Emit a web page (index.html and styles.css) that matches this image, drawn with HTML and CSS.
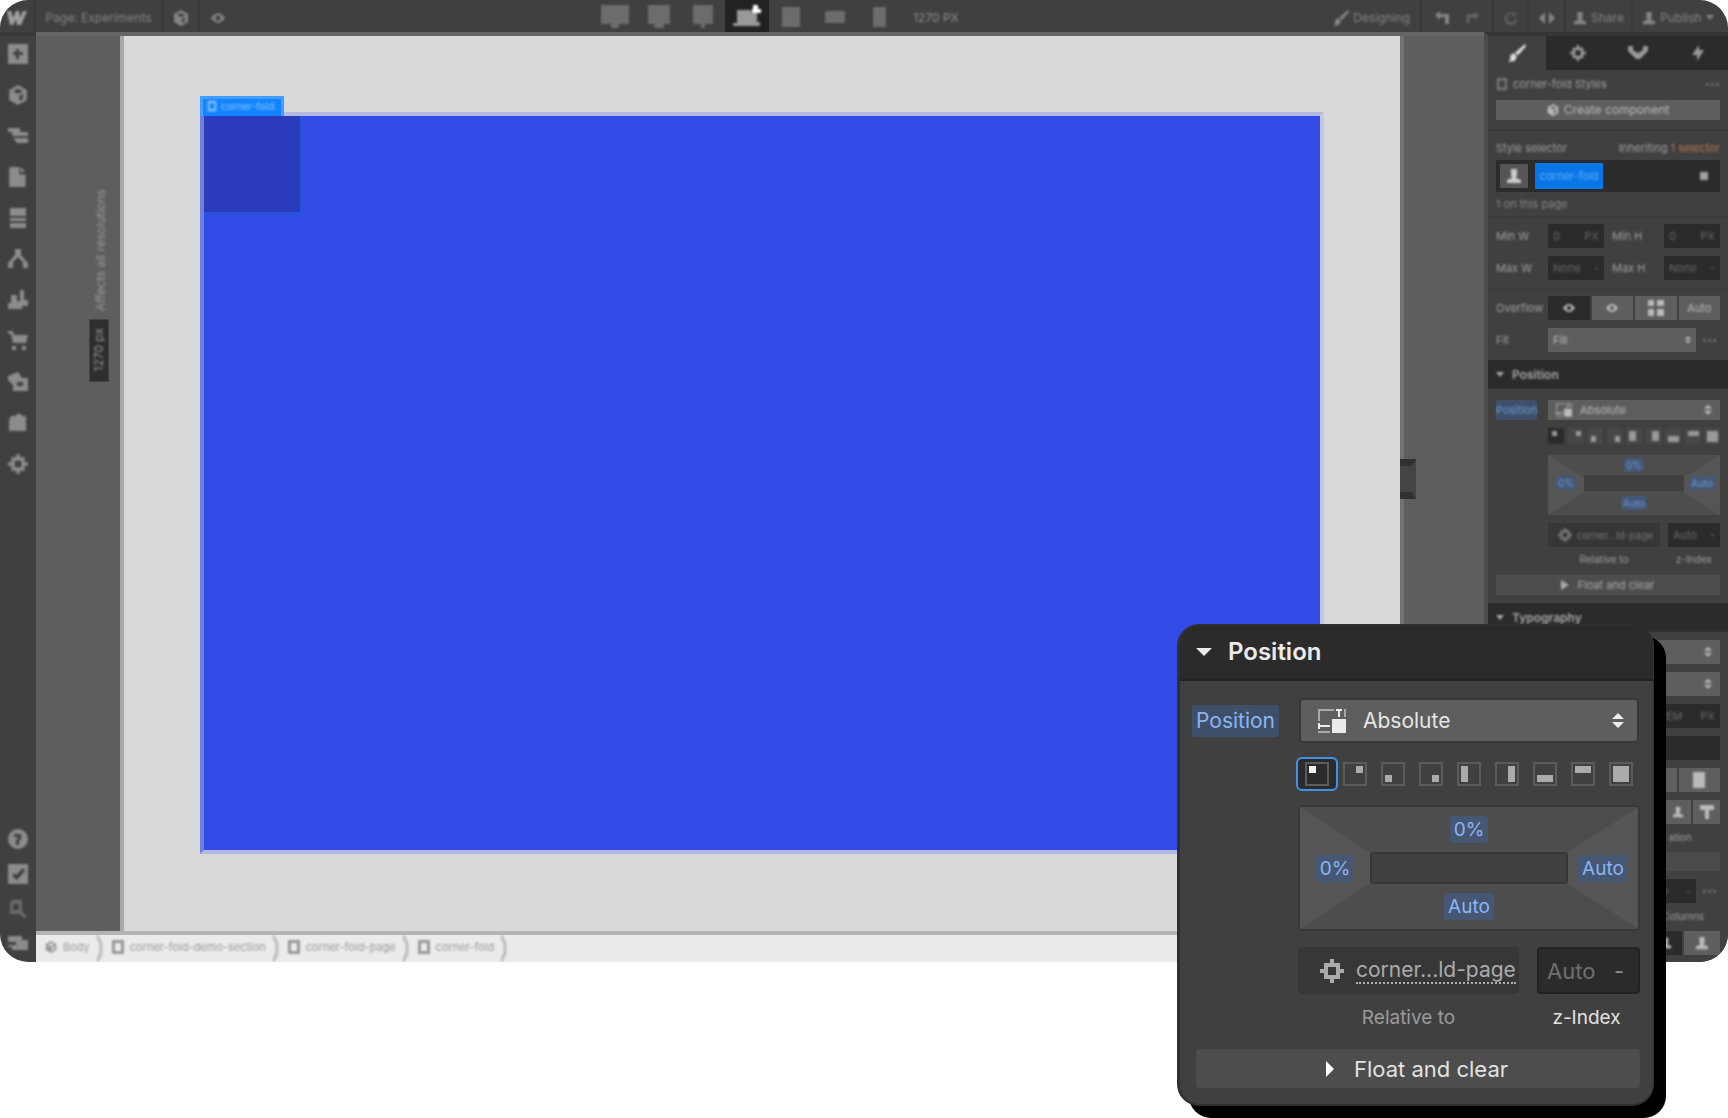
FILE: index.html
```html
<!DOCTYPE html>
<html lang="en">
<head>
<meta charset="utf-8">
<title>Position</title>
<link rel="stylesheet" href="styles.css">
</head>
<body>
<svg class="sprite" aria-hidden="true">
  <symbol id="brush" viewBox="0 0 16 16"><path d="M15 0 16 2 9 10 6 8zM5 8l3 3-2 4-6 1 2-2V10z"/></symbol>
  <symbol id="cube" viewBox="0 0 16 16"><path fill-rule="evenodd" d="M8 0l7 4v8l-7 4-7-4V4zM8 3 4 5l4 2 4-2zM9 9v4l3-2V7z"/></symbol>
  <symbol id="page" viewBox="0 0 16 16"><path d="M1 0h8v6h5v10H1zM10 0l4 4h-4z"/></symbol>
  <symbol id="arrows" viewBox="0 0 12 16"><path d="M0 6 6 0l6 6zM0 9h12l-6 6z"/></symbol>
  <symbol id="element" viewBox="0 0 12 16"><path fill-rule="evenodd" d="M0 1h12v14H0zM3 4v8h6V4z"/></symbol>
  <symbol id="target" viewBox="0 0 24 24"><path fill-rule="evenodd" d="M10 0h4v4h6v6h4v4h-4v6h-6v4h-4v-4H4v-6H0v-4h4V4h6zM8 8v8h8V8z"/></symbol>
  <symbol id="person" viewBox="0 0 16 16"><path d="M5 1h6v6l-1 3 5 2v3H1v-3l5-2-1-3z"/></symbol>
  <symbol id="eye" viewBox="0 0 16 16"><path fill-rule="evenodd" d="M0 8q8-11 16 0-8 11-16 0zm5 0a3 3 0 0 0 6 0 3 3 0 0 0-6 0z"/></symbol>
  <symbol id="abs" viewBox="0 0 28 24"><path fill="#a8a8a8" d="M0 0h16v2H2v10H0zM26 0h2v8h-2zM0 22h12v2H0z"/><path d="M18 0h6v2h-2v6h-2V2h-2zM0 14h2v2h10v2H2v2H0zM14 10h14v14H14z"/></symbol>
</svg>
<main class="scene">
  <div class="editor">
    <header class="topbar">
      <div class="cell logo"><svg class="soft" width="20" height="14" viewBox="0 0 20 14"><path d="M0 0h4l2 7 3-7h3l1 7 3-7h4l-6 14h-4l-1-6-3 6H3z"/></svg></div>
      <div class="cell project"><span class="soft">Page: Experiments</span></div>
      <div class="cell small"><svg class="soft" width="16" height="16"><use href="#cube"/></svg></div>
      <div class="cell preview"><svg class="soft" width="18" height="14" viewBox="0 0 16 16"><use href="#eye"/></svg></div>
      <div class="devices">
        <button aria-label="Large"><svg class="soft" width="28" height="24" viewBox="0 0 28 24"><path d="M0 0h28v19H18v4h-8v-4H0z"/></svg></button>
        <button aria-label="Wide"><svg class="soft" width="22" height="24" viewBox="0 0 22 24"><path d="M0 0h22v19h-6v4H6v-4H0z"/></svg></button>
        <button aria-label="Desktop"><svg class="soft" width="20" height="24" viewBox="0 0 20 24"><path d="M0 0h20v19h-8v4H8v-4H0z"/></svg></button>
        <button class="on" aria-label="Base"><svg class="soft" width="28" height="24" viewBox="0 0 28 24"><path d="M4 5h14v3h6v9h3v4H0v-3h4z"/><path fill="#fff" d="M20 0h5v4h3v4h-9V4h1z"/></svg></button>
        <button aria-label="Tablet"><svg class="soft" width="18" height="20"><path d="M0 0h18v20H0z"/></svg></button>
        <button aria-label="Landscape"><svg class="soft" width="20" height="12"><path d="M0 0h20v12H0z"/></svg></button>
        <button aria-label="Portrait"><svg class="soft" width="13" height="20"><path d="M0 0h13v20H0z"/></svg></button>
        <span class="soft size">1270 PX</span>
      </div>
      <div class="cell mode"><svg class="soft" width="16" height="16"><use href="#brush"/></svg><span class="soft">Designing</span></div>
      <div class="cell history"><svg class="soft" width="16" height="14" viewBox="0 0 16 14"><path d="M0 4 5 0v3h9v10h-4V6H5v3z"/></svg><svg class="soft faint" width="14" height="14" viewBox="0 0 16 14"><path d="M16 4 11 0v3H2v10h3V6h6v3z"/></svg></div>
      <div class="cell small"><svg class="soft faint" width="14" height="14" viewBox="0 0 16 16"><path d="M13 1v5H9l2-2a5 5 0 1 0 2 5h2A7 7 0 1 1 12 3z"/></svg></div>
      <div class="cell small"><svg class="soft" width="16" height="12" viewBox="0 0 16 12"><path d="M6 0v12L0 6zM10 0v12l6-6z"/></svg></div>
      <div class="cell share"><svg class="soft" width="14" height="16"><use href="#person"/></svg><span class="soft">Share</span></div>
      <div class="cell publish"><svg class="soft" width="14" height="14"><use href="#person"/></svg><span class="soft">Publish</span><svg class="soft" width="8" height="6"><path d="M0 0h8L4 5z"/></svg></div>
    </header>

    <nav class="rail">
      <svg class="soft" viewBox="0 0 20 20"><path fill-rule="evenodd" d="M0 0h20v20H0zM8 5v3H5v3h3v4h3v-4h4V8h-4V5z"/></svg>
      <svg class="soft" viewBox="0 0 16 16"><use href="#cube"/></svg>
      <svg class="soft" viewBox="0 0 20 20"><path d="M0 2h12v4h8v4H4V6H0zM5 12h15v5H9z"/></svg>
      <svg class="soft" viewBox="0 0 16 16"><use href="#page"/></svg>
      <svg class="soft" viewBox="0 0 20 20"><path d="M2 0h16v8H2zM2 10h16v3H2zM2 15h16v5H2z"/></svg>
      <svg class="soft" viewBox="0 0 20 20"><path d="M7 0h6v6l7 8v5h-5v-6l-5-5-5 5v6H0v-5l7-8z"/></svg>
      <svg class="soft" viewBox="0 0 20 20"><path d="M12 0h4v10h4v6h-6v3H0v-6h3V5h6v6h3z"/></svg>
      <svg class="soft" viewBox="0 0 20 20"><path d="M0 0h5l1 4h14l-2 8H5L3 3H0zM4 15h4v4H4zM14 15h4v4h-4z"/></svg>
      <svg class="soft" viewBox="0 0 20 20"><path fill-rule="evenodd" d="M0 4 10 0l4 6h6v13H5v-6L0 8zM9 10v4h6v-4z"/></svg>
      <svg class="soft" viewBox="0 0 20 20"><path d="M3 3h4l4-3 4 3h3v15H1V7z"/></svg>
      <svg class="soft" viewBox="0 0 24 24"><use href="#target"/></svg>
      <svg class="soft foot" viewBox="0 0 20 20"><path fill-rule="evenodd" d="M10 0a10 10 0 1 0 0 20 10 10 0 0 0 0-20zM6 5h7v6h-2v5H8v-6h2V8H6z"/></svg>
      <svg class="soft" viewBox="0 0 20 20"><path fill-rule="evenodd" d="M0 0h20v20H0zM15 4 8 11 5 9v4l4 3 8-9z"/></svg>
      <svg class="soft faint" viewBox="0 0 20 20"><path fill-rule="evenodd" d="M4 1h10v11l5 6-3 1-4-4H2V4zM5 5v6h6V5z"/></svg>
      <svg class="soft" viewBox="0 0 20 20"><path d="M0 2h14v4h6v10H4v-3H0v-2h8V8H0z"/></svg>
    </nav>

    <section class="workspace">
      <div class="gutter"><span class="soft">Affects all resolutions</span><b><span class="soft">1270 px</span></b></div>
      <div class="frame"><div class="stage"><span class="tag"><svg class="soft" width="10" height="12" viewBox="0 0 12 16"><use href="#element"/></svg><span class="soft">corner-fold</span></span><div class="fold"></div></div></div>
      <div class="gutter right"><i></i></div>
    </section>

    <footer class="crumbs">
      <a href="#"><svg class="soft" width="12" height="14" viewBox="0 0 16 16"><use href="#cube"/></svg><span class="soft">Body</span></a>
      <svg class="soft sep" width="6" height="27" viewBox="0 0 6 27"><path d="M0 0l4 9v9l-4 9"/></svg>
      <a href="#"><svg class="soft" width="12" height="16"><use href="#element"/></svg><span class="soft">corner-fold-demo-section</span></a>
      <svg class="soft sep" width="6" height="27" viewBox="0 0 6 27"><path d="M0 0l4 9v9l-4 9"/></svg>
      <a href="#"><svg class="soft" width="12" height="16"><use href="#element"/></svg><span class="soft">corner-fold-page</span></a>
      <svg class="soft sep" width="6" height="27" viewBox="0 0 6 27"><path d="M0 0l4 9v9l-4 9"/></svg>
      <a href="#"><svg class="soft" width="12" height="16"><use href="#element"/></svg><span class="soft">corner-fold</span></a>
      <svg class="soft sep" width="6" height="27" viewBox="0 0 6 27"><path d="M0 0l4 9v9l-4 9"/></svg>
    </footer>

    <aside class="panel">
      <div class="tabs">
        <button class="on" aria-label="Style"><svg class="soft" width="22" height="18" viewBox="0 0 16 16"><use href="#brush"/></svg></button>
        <button aria-label="Settings"><svg class="soft" width="16" height="16" viewBox="0 0 24 24"><use href="#target"/></svg></button>
        <button aria-label="Interactions"><svg class="soft" width="20" height="16" viewBox="0 0 20 16"><path d="M0 1h5v4l5 3 5-3V1h5v5l-8 8H8L0 6z"/></svg></button>
        <button aria-label="Effects"><svg class="soft" width="12" height="16" viewBox="0 0 12 16"><path d="M7 0v5h5L5 16v-6H0z"/></svg></button>
      </div>
      <div class="group head">
        <div class="line title"><svg class="soft faint" width="12" height="14" viewBox="0 0 12 16"><use href="#element"/></svg><span class="soft">corner-fold Styles</span><span class="soft end more">•••</span></div>
        <button class="wide light"><svg class="soft" width="12" height="12"><use href="#cube"/></svg><span class="soft">Create component</span></button>
      </div>
      <div class="group selector">
        <div class="line"><span class="soft">Style selector</span><span class="soft end">Inheriting <em>1 selector</em></span></div>
        <div class="well"><i><svg class="soft" width="16" height="16"><use href="#person"/></svg></i><b><span class="soft">corner-fold</span></b><svg class="soft end" width="8" height="8"><path d="M0 0h8v8H0z"/></svg></div>
        <div class="line note"><span class="soft">1 on this page</span></div>
      </div>
      <div class="group sizes">
        <span class="soft">Min W</span><div class="dark field"><span class="soft">0</span><span class="soft">PX</span></div>
        <span class="soft">Min H</span><div class="dark field"><span class="soft">0</span><span class="soft">PX</span></div>
        <span class="soft">Max W</span><div class="dark field"><span class="soft">None</span><span class="soft">-</span></div>
        <span class="soft">Max H</span><div class="dark field"><span class="soft">None</span><span class="soft">-</span></div>
      </div>
      <div class="group pair">
        <span class="soft">Overflow</span>
        <div class="segments"><button class="on" aria-label="Visible"><svg class="soft" width="16" height="12" viewBox="0 0 16 16"><use href="#eye"/></svg></button><button aria-label="Hidden"><svg class="soft" width="16" height="12" viewBox="0 0 16 16"><use href="#eye"/></svg></button><button aria-label="Scroll"><svg class="soft" width="16" height="16"><path d="M0 0h6v6H0zM9 0h7v6H9zM0 9h6v7H0zM9 9h7v7H9z"/></svg></button><button><span class="soft">Auto</span></button></div>
        <span class="soft">Fit</span>
        <div class="fit"><div class="light field"><span class="soft">Fill</span><svg class="soft" width="6" height="12" viewBox="0 0 12 16"><use href="#arrows"/></svg></div><span class="soft more">•••</span></div>
      </div>
      <h2 class="bar"><svg class="soft" width="8" height="5"><path d="M0 0h8L4 5z"/></svg><span class="soft">Position</span></h2>
      <div class="group position">
        <span class="hint"><span class="soft">Position</span></span>
        <div class="light field kind"><svg class="soft" width="16" height="14"><use href="#abs"/></svg><span class="soft">Absolute</span><svg class="soft end" width="8" height="12"><use href="#arrows"/></svg></div>
        <div class="minis second">
          <svg class="soft on" viewBox="0 0 16 16"><path d="M4 3h5v5H4z"/></svg><svg class="soft" viewBox="0 0 16 16"><path d="M8 3h5v5H8z"/></svg><svg class="soft" viewBox="0 0 16 16"><path d="M4 8h5v6H4z"/></svg><svg class="soft" viewBox="0 0 16 16"><path d="M8 8h5v6H8z"/></svg><svg class="soft" viewBox="0 0 16 16"><path d="M3 3h7v10H3z"/></svg><svg class="soft" viewBox="0 0 16 16"><path d="M6 3h7v10H6z"/></svg><svg class="soft" viewBox="0 0 16 16"><path d="M3 8h11v6H3z"/></svg><svg class="soft" viewBox="0 0 16 16"><path d="M3 3h11v5H3z"/></svg><svg class="soft" viewBox="0 0 16 16"><path d="M3 3h11v11H3z"/></svg>
        </div>
        <div class="inset mini second"><span class="hint t"><span class="soft">0%</span></span><span class="hint l"><span class="soft">0%</span></span><i></i><span class="hint r"><span class="soft">Auto</span></span><span class="hint b"><span class="soft">Auto</span></span></div>
        <div class="relative second">
          <div class="dim"><svg class="soft" width="14" height="14"><use href="#target"/></svg><span class="soft">corner...ld-page</span></div>
          <div class="dark field"><span class="soft">Auto</span><span class="soft">-</span></div>
          <span class="soft">Relative to</span><span class="soft">z-Index</span>
        </div>
        <button class="wide float"><svg class="soft" width="8" height="10"><path d="M0 0l8 5-8 5z"/></svg><span class="soft">Float and clear</span></button>
      </div>
      <h2 class="bar"><svg class="soft" width="8" height="5"><path d="M0 0h8L4 5z"/></svg><span class="soft">Typography</span></h2>
      <div class="group type">
        <div class="light field"><svg class="soft" width="8" height="12"><use href="#arrows"/></svg></div>
        <div class="light field"><svg class="soft" width="8" height="12"><use href="#arrows"/></svg></div>
        <div class="dark field duo"><span class="soft">EM</span><span class="soft">PX</span></div>
        <div class="dark field"></div>
        <div class="segments"><i></i><i></i><i></i><i><svg class="soft" width="12" height="16"><path d="M0 0h12v16H0z"/></svg></i></div>
        <div class="segments six"><i></i><i></i><i></i><i></i><i><svg class="soft" width="12" height="14"><use href="#person"/></svg></i><i><svg class="soft" width="14" height="14"><path d="M0 0h14v5H9v9H5V5H0z"/></svg></i></div>
        <span class="soft cap">ation</span>
        <div class="grey"></div>
        <div class="fit"><div class="dark field duo"><span class="soft">0</span><span class="soft">-</span></div><span class="soft more">•••</span></div>
        <span class="soft cap col">Columns</span>
        <div class="segments three"><i></i><i class="on"><svg class="soft" width="12" height="14"><use href="#person"/></svg></i><i><svg class="soft" width="14" height="14"><use href="#person"/></svg></i></div>
      </div>
    </aside>
  </div>

  <section class="card">
    <h1><svg width="16" height="8" viewBox="0 0 16 8"><path d="M0 0h16L8 8z"/></svg>Position</h1>
    <div class="card-body">
      <label class="hint" for="kind">Position</label>
      <div class="select">
        <svg class="kind-icon" width="28" height="24"><use href="#abs"/></svg>
        <select id="kind"><option>Absolute</option></select>
        <svg class="kind-arrows" width="12" height="16"><use href="#arrows"/></svg>
      </div>
      <div class="presets">
        <button class="on" aria-label="Top left"><svg><path d="M4 4h7v7H4z"/></svg></button>
        <button aria-label="Top right"><svg><path d="M13 4h7v7h-7z"/></svg></button>
        <button aria-label="Bottom left"><svg><path d="M4 13h7v7H4z"/></svg></button>
        <button aria-label="Bottom right"><svg><path d="M13 13h7v7h-7z"/></svg></button>
        <button aria-label="Left"><svg><path d="M4 4h7v16H4z"/></svg></button>
        <button aria-label="Right"><svg><path d="M13 4h7v16h-7z"/></svg></button>
        <button aria-label="Bottom"><svg><path d="M4 13h16v7H4z"/></svg></button>
        <button aria-label="Top"><svg><path d="M4 4h16v7H4z"/></svg></button>
        <button aria-label="Full"><svg><path d="M4 4h16v16H4z"/></svg></button>
      </div>
      <div class="inset big"><button class="hint t">0%</button><button class="hint l">0%</button><i></i><button class="hint r">Auto</button><button class="hint b">Auto</button></div>
      <div class="parent">
        <div class="anchor"><svg width="24" height="24"><use href="#target"/></svg><a href="#">corner...ld-page</a></div>
        <div class="zbox"><input id="z" placeholder="Auto"><span>-</span></div>
        <span class="muted">Relative to</span><label for="z">z-Index</label>
      </div>
      <button class="clear"><svg width="8" height="16" viewBox="0 0 8 16"><path d="M0 0l8 8-8 8z"/></svg>Float and clear</button>
    </div>
  </section>
</main>
</body>
</html>
```
FILE: styles.css
```css
* { box-sizing: border-box; }
body { margin: 0; background: #fff; font-family: Inter, "Liberation Sans", sans-serif; font-size: 12px; line-height: 16px; color: #a0a0a0; }
h1, h2 { margin: 0; }
button { border: 0; margin: 0; padding: 0; background: none; font: inherit; color: inherit; }
svg { fill: currentColor; flex: none; display: block; }
i, em { font-style: normal; }
b { font-weight: 400; }
.sprite { position: absolute; width: 0; height: 0; }
.soft { filter: blur(1px); white-space: nowrap; }
.faint { opacity: .55; }
.end { margin-left: auto; }

.scene { position: relative; min-height: 100vh; overflow: hidden; }
.editor { display: grid; grid-template-columns: 36px minmax(0, 1fr) 244px; grid-template-rows: 32px 1fr 31px; border-radius: 28px; overflow: hidden; background: #404040; }

.topbar { grid-column: 1 / -1; display: flex; align-items: stretch; color: #858585; }
.cell { display: flex; align-items: center; justify-content: center; gap: 4px; padding-top: 3px; border-right: 3px solid #3a3a3a; }
.logo { width: 36px; color: #a0a0a0; }
.project { width: 128px; }
.small { width: 36px; }
.preview { width: 36px; border: 0; }
.devices { flex: 1; display: flex; justify-content: center; padding-right: 8px; color: #6c6c6c; }
.devices button { width: 44px; display: grid; place-items: center; padding-top: 2px; }
.devices .on { background: #222; color: #999; }
.size { padding-left: 12px; line-height: 35px; color: #8c8c8c; }
.mode { width: 98px; }
.history { width: 72px; gap: 14px; }
.share { width: 68px; }
.publish { width: 94px; border: 0; padding-right: 6px; }

.rail { grid-row: 2 / 4; border-top: 4px solid #383838; display: flex; flex-direction: column; align-items: center; gap: 21px; padding: 8px 0 8px; color: #8c8c8c; }
.rail svg { width: 20px; height: 20px; }
.rail .foot { margin-top: auto; }
.rail .foot ~ svg { margin-top: -6px; }

.workspace { border-top: 4px solid #656565; background: #5e5e5e; display: flex; }
.gutter { width: 84px; padding: 151px 11px 0 0; display: flex; flex-direction: column; align-items: flex-end; gap: 8px; color: #999; }
.gutter > span, .gutter b span { writing-mode: vertical-rl; transform: rotate(180deg); }
.gutter > span { height: 124px; }
.gutter b { background: #2e2e2e; border: 1px solid #444; height: 63px; padding: 8px 1px; }
.gutter.right { width: 80px; padding: 423px 0 0; align-items: flex-start; }
.gutter i { width: 16px; height: 40px; margin-left: -4px; background: #444; border: 4px solid #303030; border-width: 7px 4px 7px 0; border-right-color: #444; }
.frame { flex: 1; display: flex; background: #d8d9db; border: solid #a8a8a8; border-width: 0 4px; border-right-color: #707172; padding: 76px 76px 77px; }
.stage { flex: 1; position: relative; background: #324ae6; border: 4px solid #b4b9e2; border-left-color: #6d82de; border-right-color: #c5c9df; }
.fold { width: 100px; height: 100px; background: #2a3cbc; border: solid #2b52de; border-width: 0 4px 4px 0; }
.tag { position: absolute; left: -4px; top: -20px; width: 84px; height: 20px; display: flex; align-items: center; gap: 4px; padding: 0 0 3px 4px; background: #1284ff; border: solid #429dff; border-width: 3px 3px 0; color: #8cc4ff; font-size: 10px; }

.crumbs { grid-column: 2; grid-row: 3; background: #ebebeb; border-top: 4px solid #b4b4b4; display: flex; color: #999; }
.crumbs a { display: flex; align-items: center; gap: 6px; color: inherit; text-decoration: none; padding: 0 7px 3px 9px; font-size: 11px; }
.sep { fill: none; stroke: #bbb; stroke-width: 3px; }

.panel { grid-column: 3; grid-row: 2 / 4; border-left: 4px solid #4c4c4c; border-top: 4px solid #353535; background: #404040; }
.tabs { height: 34px; display: grid; grid-template-columns: 60px 1fr 1fr 1fr; background: #2b2b2b; color: #999; }
.tabs button { display: grid; place-items: center; }
.tabs .on { background: #404040; color: #ddd; margin-right: 2px; }
.group { padding: 0 8px; }
.line { height: 20px; display: flex; align-items: center; gap: 5px; font-size: 11px; }
.title { height: 28px; margin-bottom: 2px; }
.wide { width: 100%; height: 20px; display: flex; align-items: center; justify-content: center; gap: 5px; background: #4d4d4d; color: #aaa; }
.light, .wide.light { background: #5e5e5e; color: #bbb; }
.head { padding-bottom: 9px; border-bottom: 2px solid #393939; }
.selector { padding-top: 7px; border-bottom: 2px solid #3b3b3b; }
.selector em { color: #b8764c; }
.well { margin-top: 2px; height: 32px; background: #2b2b2b; display: flex; align-items: center; padding: 0 12px 0 4px; gap: 7px; }
.well i { width: 28px; height: 24px; background: #555; color: #ccc; display: grid; place-items: center; }
.well b { width: 68px; height: 26px; background: #0876e8; color: #65adf5; display: grid; place-items: center; font-size: 11px; }
.note { height: 24px; color: #858585; }
.field { height: 24px; display: flex; align-items: center; justify-content: space-between; padding: 0 5px; font-size: 11px; min-width: 0; }
.dark { background: #2b2b2b; color: #686868; }
.sizes { display: grid; grid-template-columns: 52px 56px 60px 56px; row-gap: 8px; align-items: center; padding-top: 6px; padding-bottom: 8px; border-bottom: 2px solid #3d3d3d; font-size: 11px; }
.sizes > span:nth-of-type(even) { padding-left: 8px; }
.pair { display: grid; grid-template-columns: 52px 1fr; row-gap: 8px; align-items: center; padding-top: 6px; padding-bottom: 8px; font-size: 11px; }
.segments { height: 24px; display: grid; grid-template-columns: repeat(4, 1fr); column-gap: 2px; color: #bbb; }
.segments > * { background: #5e5e5e; display: grid; place-items: center; min-width: 0; }
.segments .on { background: #2b2b2b; }
.fit { display: grid; grid-template-columns: 1fr 24px; text-align: right; align-items: center; }
.more { font-size: 9px; color: #777; }
.fit .more { padding-right: 3px; }
.bar { height: 29px; background: #2b2b2b; border-bottom: 2px solid #303030; display: flex; align-items: center; gap: 8px; padding: 2px 0 0 8px; font-size: 12px; font-weight: 600; color: #aaa; }
.position { display: grid; grid-template-columns: 52px 1fr; padding-top: 11px; padding-bottom: 8px; font-size: 11px; }
.second { grid-column: 2; }
.hint { background: #3e4f69; color: #8bb5f1; border-radius: 3px; }
.position .hint { line-height: 20px; height: 20px; justify-self: start; color: #6d99d6; }
.kind { height: 20px; justify-content: flex-start; gap: 8px; padding: 0 8px; }
.minis { display: grid; grid-template-columns: repeat(9, 16px); justify-content: space-between; margin-top: 8px; color: #999; }
.minis svg { width: 16px; height: 16px; background: #484848; }
.minis .on { background: #2b2b2b; }
.inset { display: grid; align-items: center; justify-items: center; background: #4d4d4d; }
.inset i { grid-area: 2 / 2; align-self: stretch; justify-self: stretch; background: #404040; }
.inset::before, .inset::after { content: ""; grid-row: 1 / 4; width: 100%; height: 100%; background: #555; }
.inset::before { grid-column: 1; clip-path: polygon(0 0, 100% 37%, 100% 63%, 0 100%); }
.inset::after { grid-column: 3; clip-path: polygon(100% 0, 0 37%, 0 63%, 100% 100%); }
.inset .t { grid-area: 1 / 2; }
.inset .l { grid-area: 2 / 1; }
.inset .r { grid-area: 2 / 3; }
.inset .b { grid-area: 3 / 2; }
.inset .hint { z-index: 1; justify-self: center; background: #455773; }
.mini { height: 60px; margin-top: 11px; grid-template: 20px 16px 24px / 36px 1fr 36px; }
.position .mini .hint { height: 14px; line-height: 14px; padding: 0 2px; font-size: 10px; justify-self: center; }
.relative { margin-top: 8px; display: grid; grid-template-columns: 1fr 52px; column-gap: 8px; row-gap: 2px; }
.relative > span { line-height: 20px; text-align: center; font-size: 10px; }
.dim { background: #363636; display: flex; align-items: center; gap: 5px; padding-left: 10px; color: #777; min-width: 0; overflow: hidden; font-size: 10px; }
.float { grid-column: 1 / -1; margin-top: 6px; gap: 8px; }
.type { padding: 8px 8px 7px 60px; display: grid; gap: 8px; font-size: 11px; }
.type > .light { justify-content: flex-end; padding: 0 8px; }
.type .duo { justify-content: flex-end; gap: 18px; }
.type .six { grid-template-columns: repeat(6, 1fr); }
.type .three { grid-template-columns: 1fr 32px 36px; }
.type .cap { line-height: 20px; margin: -5px 28px -3px; text-align: right; font-size: 10px; }
.type .col { margin: -5px 16px -3px; }
.grey { height: 19px; background: #4a4a4a; }

.card { position: absolute; top: 624px; right: 74px; width: 477px; border-radius: 22px; background: #404040; border: solid #303030; border-width: 1px 1px 2px 3px; box-shadow: 12px 12px 0 #000; font-size: 21px; line-height: 24px; color: #e2e2e2; }
.card h1 { height: 56px; border-bottom: 2px solid #222; border-radius: 20px 20px 0 0; background: #2b2b2b; display: flex; align-items: center; gap: 16px; padding-left: 16px; font-size: 24px; line-height: 28px; font-weight: 600; color: #ebebeb; }
.card-body { display: grid; grid-template-columns: 102px 1fr; padding: 17px 18px 16px 16px; }
.card-body > .hint { margin-left: -4px; justify-self: start; align-self: center; padding: 4px; }
.select { position: relative; margin: 0 1px; }
.select select { appearance: none; width: 100%; height: 45px; border: 2px solid #383838; border-radius: 4px; background: #5e5e5e; color: #e6e6e6; font: inherit; padding: 0 40px 0 62px; }
.select svg { position: absolute; pointer-events: none; color: #ebebeb; }
.kind-icon { left: 19px; top: 11px; }
.kind-arrows { right: 15px; top: 15px; }
.presets { grid-column: 2; display: grid; grid-template-columns: repeat(9, 38px); margin: 16px 0 0; height: 30px; color: #ababab; }
.presets button { display: grid; place-items: center; }
.presets svg { width: 24px; height: 24px; box-shadow: inset 0 0 0 2px #5c5c5c; }
.presets .on { background: #2b2b2b; color: #f0f0f0; border-radius: 4px; outline: 2px solid #3f92e8; }
.big { grid-column: 2; height: 126px; margin: 16px 0 0; border: 2px solid #383838; border-radius: 4px; grid-template: 45px 32px 45px / 70px 1fr 70px; }
.big i { border: 2px solid #363636; border-radius: 4px; }
.big .hint { height: 27px; padding: 0 4px; font-size: 19px; line-height: 27px; }
.parent { grid-column: 2; display: grid; grid-template-columns: 221px 103px; justify-content: space-between; margin-top: 16px; row-gap: 12px; font-size: 19px; text-align: center; }
.anchor { height: 47px; background: #373737; border-radius: 4px; display: flex; align-items: center; gap: 12px; padding-left: 22px; color: #ababab; font-size: 21px; }
.anchor a { color: inherit; text-decoration: none; border-bottom: 2px dotted #b0b0b0; white-space: nowrap; }
.zbox { height: 47px; border: 2px solid #222; border-radius: 4px; background: #2b2b2b; display: flex; align-items: center; padding: 0 14px 0 8px; color: #8c8c8c; font-size: 22px; }
.zbox input { min-width: 0; flex: 1; border: 0; padding: 0; background: none; font: inherit; color: inherit; }
.zbox input::placeholder { color: #707070; }
.muted { color: #9c9c9c; }
.parent label { padding-right: 4px; }
.clear { grid-column: 1 / -1; height: 39px; margin-top: 19px; background: #4d4d4d; border-radius: 4px; display: flex; align-items: center; justify-content: center; gap: 20px; font-size: 22px; padding-right: 2px; }
.clear svg { color: #fff; }
```
